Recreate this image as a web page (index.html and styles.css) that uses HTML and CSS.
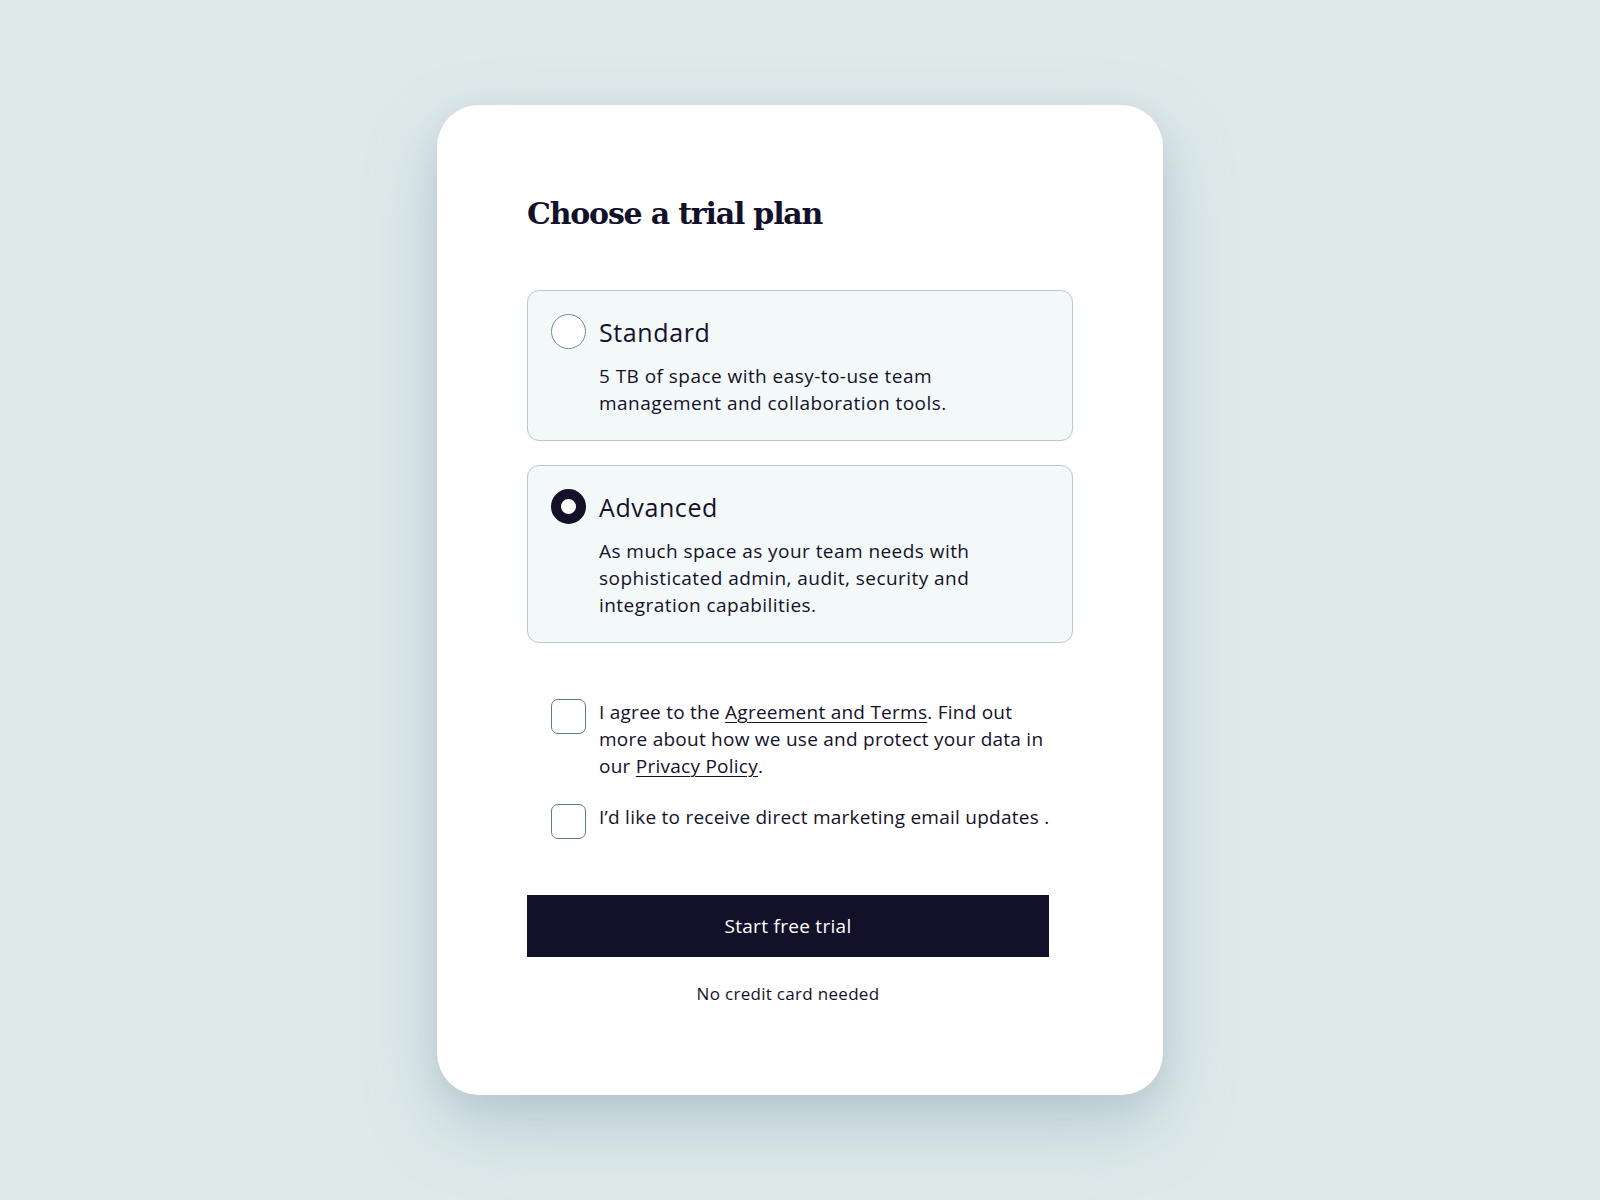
FILE: index.html
```html
<!DOCTYPE html>
<html lang="en">
<head>
<meta charset="utf-8">
<title>Choose a trial plan</title>
<link rel="stylesheet" href="styles.css">
</head>
<body>
<main class="page">
  <section class="card">
    <h1 class="title">Choose a trial plan</h1>

    <div class="plans">
      <label class="plan">
        <div class="plan-head">
          <span class="radio"></span>
          <span class="plan-name">Standard</span>
        </div>
        <p class="plan-desc">5 TB of space with easy-to-use team<br>management and collaboration tools.</p>
      </label>

      <label class="plan">
        <div class="plan-head">
          <span class="radio radio-on"></span>
          <span class="plan-name">Advanced</span>
        </div>
        <p class="plan-desc">As much space as your team needs with<br>sophisticated admin, audit, security and<br>integration capabilities.</p>
      </label>
    </div>

    <div class="checks">
      <label class="check">
        <span class="box"></span>
        <span class="check-text">I agree to the <a class="link" href="#">Agreement and Terms</a>. Find out<br>more about how we use and protect your data in<br>our <a class="link" href="#">Privacy Policy</a>.</span>
      </label>
      <label class="check">
        <span class="box"></span>
        <span class="check-text">I’d like to receive direct marketing email updates .</span>
      </label>
    </div>

    <button class="cta" type="button">Start free trial</button>
    <p class="note">No credit card needed</p>
  </section>
</main>
</body>
</html>
```

FILE: styles.css
```css
* { box-sizing: border-box; }

html, body {
  margin: 0;
  padding: 0;
}

body {
  background: #dee9ea;
  font-family: "Open Sans", "Inter", sans-serif;
  color: #13112a;
}

.page {
  width: 1600px;
  height: 1200px;
  display: flex;
  align-items: center;
  justify-content: center;
}

.card {
  width: 726px;
  height: 990px;
  background: #ffffff;
  border-radius: 42px;
  padding: 89px 90px 0 90px;
  box-shadow: 0 30px 70px rgba(120, 150, 170, 0.35), 0 8px 24px rgba(120, 150, 170, 0.15);
  display: flex;
  flex-direction: column;
}

.title {
  margin: 0;
  font-family: "DejaVu Serif", "Liberation Serif", serif;
  font-weight: bold;
  font-size: 30px;
  line-height: 40px;
  letter-spacing: -1.2px;
  color: #13112a;
}

.plans {
  margin-top: 56px;
  display: flex;
  flex-direction: column;
  gap: 24px;
}

.plan {
  display: block;
  background: #f3f8f8;
  border: 1px solid #b6cacc;
  border-radius: 12px;
  padding: 23px 23px 23px 23px;
}

.plan-head {
  display: flex;
  align-items: center;
  gap: 13px;
}

.radio {
  width: 35px;
  height: 35px;
  border-radius: 50%;
  border: 1.5px solid #6e8c8e;
  background: #ffffff;
  flex: none;
}

.radio-on {
  border: 10px solid #13112a;
}

.plan-name {
  font-size: 25px;
  line-height: 34px;
  font-weight: 500;
  letter-spacing: 0.6px;
}

.plan-desc {
  margin: 14px 0 0 48px;
  font-size: 19px;
  line-height: 27px;
  font-weight: 500;
  letter-spacing: 0.45px;
}

.checks {
  margin-top: 56px;
  padding-left: 24px;
  display: flex;
  flex-direction: column;
  gap: 24px;
}

.check {
  display: flex;
  align-items: flex-start;
  gap: 13px;
}

.box {
  width: 35px;
  height: 35px;
  border: 1.5px solid #5c7c80;
  border-radius: 7px;
  background: #ffffff;
  flex: none;
}

.check-text {
  font-size: 19px;
  line-height: 27px;
  font-weight: 500;
  letter-spacing: 0.25px;
  white-space: nowrap;
}

.link {
  color: inherit;
  text-decoration: underline;
  text-underline-offset: 3px;
  text-decoration-thickness: 1px;
}

.cta {
  margin-top: 56px;
  width: 522px;
  height: 62px;
  border: none;
  border-radius: 0;
  background: #13112a;
  color: #ffffff;
  font-family: "Open Sans", "Inter", sans-serif;
  font-size: 19px;
  font-weight: 500;
  letter-spacing: 0.3px;
  cursor: pointer;
}

.note {
  margin: 25px 0 0 0;
  width: 522px;
  text-align: center;
  font-size: 17px;
  line-height: 24px;
  font-weight: 500;
  letter-spacing: 0.3px;
}
```
